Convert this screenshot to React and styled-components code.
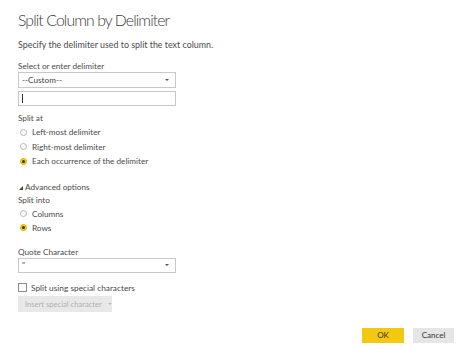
import React from "react";
import styled, { createGlobalStyle } from "styled-components";

const Global = createGlobalStyle`
  html, body {
    margin: 0;
    padding: 0;
    background: #ffffff;
  }
  body {
    font-family: Lato, "Open Sans", "Liberation Sans", sans-serif;
    color: #444444;
  }
`;

const Dialog = styled.div`
  width: 474px;
  height: 361px;
  box-sizing: border-box;
  padding: 8px 20px 0 18px;
  display: flex;
  flex-direction: column;
  background: #fff;
`;

const Title = styled.div`
  font-size: 15.8px;
  font-weight: 300;
  letter-spacing: -0.9px;
  line-height: 24px;
  height: 24px;
  color: #3b3b3b;
  white-space: nowrap;
`;

const Text = styled.div`
  font-size: ${({ fs }) => fs || 8.2}px;
  line-height: ${({ h }) => h || 12}px;
  height: ${({ h }) => h || 12}px;
  margin-top: ${({ mt }) => mt || 0}px;
  color: #4a4a4a;
  white-space: nowrap;
`;

const Field = styled.div`
  width: 158px;
  height: ${({ h }) => h || 16}px;
  box-sizing: border-box;
  border: 1px solid #c8c8c8;
  margin-top: ${({ mt }) => mt || 0}px;
  display: flex;
  align-items: center;
  justify-content: space-between;
  padding: 0 6px 0 3px;
  font-size: 8.2px;
  color: #444;
`;

const Caret = styled.span`
  width: 0;
  height: 0;
  border-left: 2px solid transparent;
  border-right: 2px solid transparent;
  border-top: 2.5px solid #555;
`;

const Cursor = styled.span`
  width: 1px;
  height: 9px;
  background: #333;
`;

const Options = styled.div`
  display: flex;
  flex-direction: column;
  margin-top: ${({ mt }) => mt || 0}px;
`;

const OptionRow = styled.label`
  display: flex;
  align-items: center;
  height: ${({ h }) => h || 14}px;
  padding-left: 2px;
  font-size: 8.2px;
  color: #4a4a4a;
  gap: 5px;
  white-space: nowrap;
`;

const Radio = styled.span`
  width: 7px;
  height: 7px;
  flex: none;
  box-sizing: border-box;
  border-radius: 50%;
  border: 1px solid ${({ checked }) => (checked ? "#e0b400" : "#b5b5b5")};
  background: ${({ checked }) => (checked ? "#f2c811" : "#fff")};
  display: flex;
  align-items: center;
  justify-content: center;
  &::after {
    content: "";
    width: 3px;
    height: 3px;
    border-radius: 50%;
    background: ${({ checked }) => (checked ? "#333" : "transparent")};
  }
`;

const Toggle = styled.div`
  display: flex;
  align-items: center;
  gap: 2px;
  height: 12px;
  line-height: 12px;
  margin-top: 12px;
  font-size: 8.2px;
  color: #4a4a4a;
  padding-left: 1px;
`;

const Tri = styled.span`
  width: 0;
  height: 0;
  border-left: 4px solid transparent;
  border-bottom: 4px solid #444;
  margin-top: 2px;
`;

const CheckRow = styled.label`
  display: flex;
  align-items: center;
  gap: 4px;
  height: 14px;
  margin-top: 8px;
  font-size: 8.3px;
  color: #4a4a4a;
  white-space: nowrap;
`;

const Box = styled.span`
  width: 9px;
  height: 9px;
  flex: none;
  box-sizing: border-box;
  border: 1px solid #8a8a8a;
  background: #fff;
`;

const InsertButton = styled.div`
  width: 94px;
  height: 16px;
  margin-top: 1px;
  background: #e8e8e8;
  color: #b0b0b0;
  font-size: 7.6px;
  display: flex;
  align-items: center;
  padding-left: 7px;
  box-sizing: border-box;
  gap: 6px;
  white-space: nowrap;
`;

const SmallCaret = styled.span`
  width: 0;
  height: 0;
  border-left: 2px solid transparent;
  border-right: 2px solid transparent;
  border-top: 2px solid #bbb;
`;

const Footer = styled.div`
  display: flex;
  justify-content: flex-end;
  gap: 9px;
  margin-top: 16px;
`;

const Button = styled.div`
  width: ${({ w }) => w || 42}px;
  height: 15px;
  display: flex;
  align-items: center;
  justify-content: center;
  font-size: 8px;
  color: #333;
  background: ${({ primary }) => (primary ? "#f2c811" : "#e6e6e6")};
`;

export default function App() {
  return (
    <>
      <Global />
      <Dialog>
        <Title>Split Column by Delimiter</Title>
        <Text h={14} mt={6} fs={8.9}>
          Specify the delimiter used to split the text column.
        </Text>
        <Text mt={8}>Select or enter delimiter</Text>
        <Field>
          <span>--Custom--</span>
          <Caret />
        </Field>
        <Field h={15} mt={3}>
          <Cursor />
        </Field>
        <Text mt={6}>Split at</Text>
        <Options mt={1}>
          <OptionRow h={14.5}>
            <Radio />
            Left-most delimiter
          </OptionRow>
          <OptionRow h={14.5}>
            <Radio />
            Right-most delimiter
          </OptionRow>
          <OptionRow h={14.5}>
            <Radio checked />
            Each occurrence of the delimiter
          </OptionRow>
        </Options>
        <Toggle>
          <Tri />
          Advanced options
        </Toggle>
        <Text mt={1}>Split into</Text>
        <Options mt={1}>
          <OptionRow>
            <Radio />
            Columns
          </OptionRow>
          <OptionRow>
            <Radio checked />
            Rows
          </OptionRow>
        </Options>
        <Text mt={11}>Quote Character</Text>
        <Field h={15}>
          <span>"</span>
          <Caret />
        </Field>
        <CheckRow>
          <Box />
          Split using special characters
        </CheckRow>
        <InsertButton>
          Insert special character
          <SmallCaret />
        </InsertButton>
        <Footer>
          <Button primary>OK</Button>
          <Button w={41}>Cancel</Button>
        </Footer>
      </Dialog>
    </>
  );
}
